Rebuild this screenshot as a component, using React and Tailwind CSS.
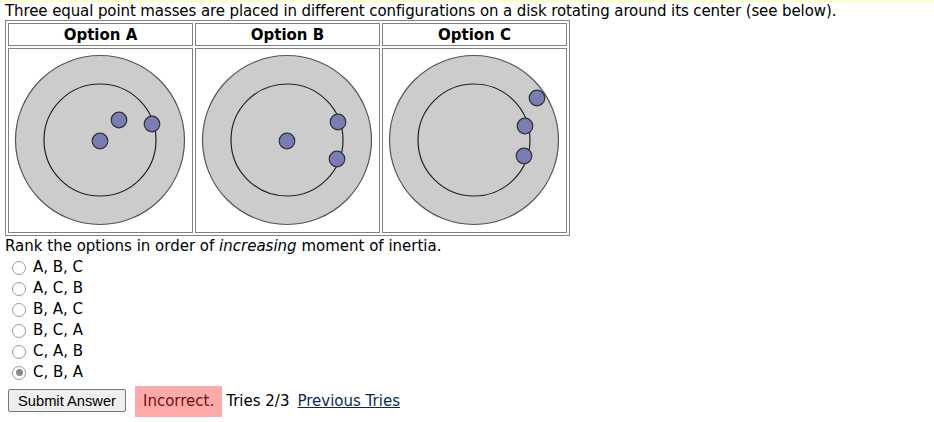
import React from 'react';

const disks = [
  { label: 'Option A', masses: [[90, 91], [109, 70], [142, 74]] },
  { label: 'Option B', masses: [[90, 91], [141, 72], [140, 109]] },
  { label: 'Option C', masses: [[153, 48], [141, 76], [140, 106]] },
];

const choices = ['A, B, C', 'A, C, B', 'B, A, C', 'B, C, A', 'C, A, B', 'C, B, A'];

function Disk({ masses }) {
  return (
    <svg width="181" height="181" viewBox="0 0 181 181" className="block">
      <circle cx="90" cy="90" r="84.5" fill="#cccccc" stroke="#555" strokeWidth="1.2" />
      <circle cx="90" cy="90" r="56" fill="none" stroke="#222" strokeWidth="1.2" />
      {masses.map(([x, y], i) => (
        <circle key={i} cx={x} cy={y} r="7.8" fill="#7a7db3" stroke="#333" strokeWidth="1.2" />
      ))}
    </svg>
  );
}

function Radio({ checked }) {
  return (
    <span className="inline-flex w-[14px] h-[14px] rounded-full border-[1.5px] border-[#9a9a9a] bg-white items-center justify-center">
      {checked && <span className="w-[7px] h-[7px] rounded-full bg-[#8a8a8a]" />}
    </span>
  );
}

export default function App() {
  return (
    <div className="font-['DejaVu_Sans',Verdana,sans-serif] text-[15px] text-black bg-white min-h-[422px] border-t-2 border-[#ffffcc]">
      <p className="pl-[5px] leading-[18px] tracking-[-0.1px]">
        Three equal point masses are placed in different configurations on a disk rotating around its center (see below).
      </p>
      <table className="ml-[5px] border border-[#808080] border-separate border-spacing-[2px]">
        <tbody>
          <tr>
            {disks.map((d) => (
              <th key={d.label} className="border border-[#808080] p-0 h-[23px] font-bold text-center leading-[18px]">
                {d.label}
              </th>
            ))}
          </tr>
          <tr>
            {disks.map((d) => (
              <td key={d.label} className="border border-[#808080] p-px">
                <Disk masses={d.masses} />
              </td>
            ))}
          </tr>
        </tbody>
      </table>
      <p className="pl-[5px] mt-[1px] leading-[19px]">
        Rank the options in order of <i>increasing</i> moment of inertia.
      </p>
      <div className="flex flex-col mt-[1px]">
        {choices.map((c, i) => (
          <div key={c} className="flex items-center h-[21px] pl-[12px]">
            <Radio checked={i === 5} />
            <span className="ml-[7px]">{c}</span>
          </div>
        ))}
      </div>
      <div className="flex items-center mt-[3px] pl-[8px]">
        <button className="font-['Liberation_Sans',Arial,sans-serif] text-[14.7px] px-[9px] h-[23px] -mt-[3px] bg-[#efefef] border border-[#767676] rounded-[2px]">
          Submit Answer
        </button>
        <span className="ml-[9px] bg-[#ffaaaa] text-[#6e0f0f] px-[8px] py-[6px] leading-[19px]">Incorrect.</span>
        <span className="ml-[4px]">Tries 2/3</span>
        <a href="#" className="ml-[8px] underline text-[#0a2a55]">Previous Tries</a>
      </div>
    </div>
  );
}
